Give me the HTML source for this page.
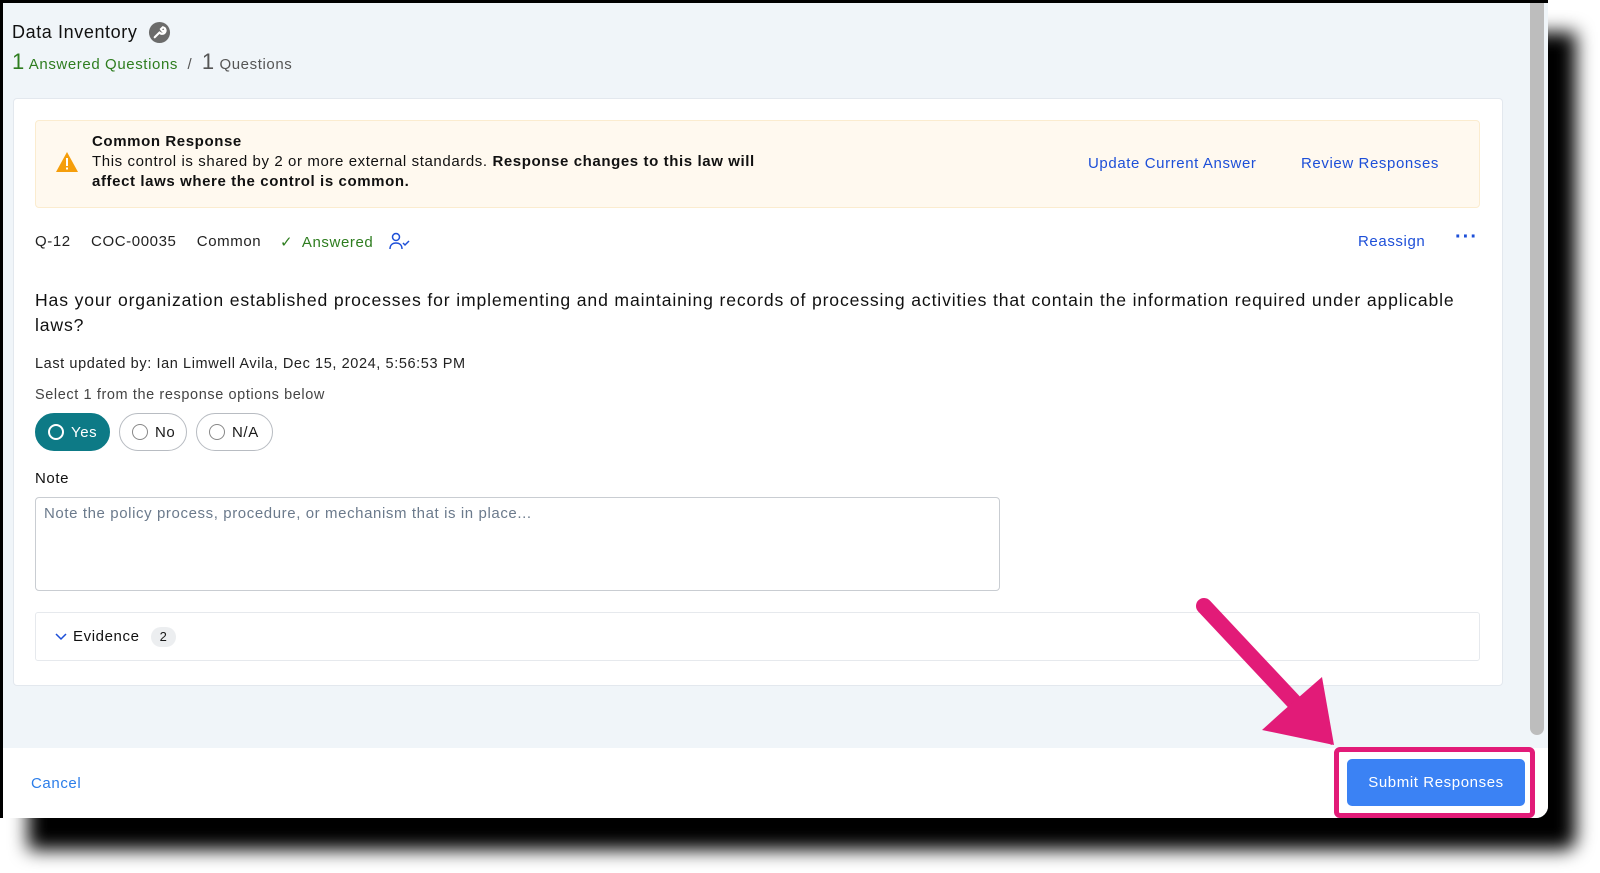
<!DOCTYPE html>
<html><head><meta charset="utf-8"><style>
*{box-sizing:border-box;margin:0;padding:0}
body{width:1600px;height:873px;background:#fff;position:relative;overflow:hidden;font-family:"Liberation Sans",sans-serif;color:#1a1a1a;letter-spacing:0.6px}
.win{position:absolute;left:0;top:0;width:1548px;height:818px;background:#f0f5f9;border:3px solid #000;border-right:none;border-bottom:none;border-radius:0 0 12px 0;box-shadow:28px 32px 18px #000;overflow:hidden}
.a{position:absolute;white-space:nowrap}
.card{position:absolute;left:10px;top:95px;width:1490px;height:588px;background:#fff;border:1px solid #e3e8ee;border-radius:4px}
.banner{position:absolute;left:32px;top:117px;width:1445px;height:88px;background:#fff9ef;border:1px solid #fbeccf;border-radius:4px}
.link{color:#1d4fd8;font-size:15px}
.pill{position:absolute;top:410px;height:38px;border:1px solid #b8bcc2;border-radius:19px;font-size:15px;display:flex;align-items:center;padding-left:12px;gap:7px}
.rad{width:16px;height:16px;border:1.5px solid #888;border-radius:50%}
.foot{position:absolute;left:0;top:745px;width:1548px;height:75px;background:#fff}
</style></head><body>
<div class="win">
 <div class="a" style="left:9px;top:19px;font-size:18px;color:#111">Data Inventory</div>
 <svg class="a" style="left:145px;top:18px" width="23" height="23" viewBox="0 0 24 24"><circle cx="12" cy="12" r="11" fill="#6b6b6b"/><path d="M7 17l5-5M12 12a3.5 3.5 0 1 0 3.5-5.5l-2 2 1 1.5 1.5 1 2-2A3.5 3.5 0 0 1 12 12" stroke="#fff" stroke-width="2.2" fill="none" stroke-linecap="round"/></svg>
 <div class="a" style="left:9px;top:46px;font-size:15px;color:#2e7d1f"><span style="font-size:22px">1</span> Answered Questions <span style="color:#555">&nbsp;/&nbsp; <span style="font-size:22px">1</span> Questions</span></div>
 <div class="card"></div>
 <div class="banner"></div>
 <svg class="a" style="left:52px;top:148px" width="24" height="22" viewBox="0 0 24 22"><path d="M12 1L23 21H1z" fill="#f59e0b"/><rect x="11" y="7" width="2" height="8" fill="#fff"/><rect x="11" y="16.5" width="2" height="2" fill="#fff"/></svg>
 <div class="a" style="left:89px;top:129px;font-size:15px;line-height:20px;font-weight:bold;color:#111">Common Response</div>
 <div class="a" style="left:89px;top:149px;font-size:15px;line-height:20px;color:#111">This control is shared by 2 or more external standards. <b>Response changes to this law will</b><br><b>affect laws where the control is common.</b></div>
 <div class="a link" style="left:1085px;top:152px">Update Current Answer</div>
 <div class="a link" style="left:1298px;top:152px">Review Responses</div>
 <div class="a" style="left:32px;top:230px;font-size:15px;color:#222;word-spacing:2px">Q-12 &nbsp; COC-00035 &nbsp; Common</div>
 <div class="a" style="left:277px;top:230px;font-size:15px;color:#2e7d1f">✓&nbsp; Answered</div>
 <svg class="a" style="left:386px;top:229px" width="22" height="18" viewBox="0 0 22 18"><circle cx="7" cy="5" r="3.5" stroke="#1d4fd8" stroke-width="1.5" fill="none"/><path d="M1 17c0-4 2.5-6 6-6s6 2 6 6M14 11l2 2 4-4" stroke="#1d4fd8" stroke-width="1.5" fill="none"/></svg>
 <div class="a link" style="left:1355px;top:230px">Reassign</div>
 <div class="a link" style="left:1452px;top:223px;font-size:20px;letter-spacing:1px;font-weight:bold">···</div>
 <div class="a" style="left:32px;top:285px;font-size:17.6px;line-height:25px;color:#111;letter-spacing:0.85px">Has your organization established processes for implementing and maintaining records of processing activities that contain the information required under applicable<br>laws?</div>
 <div class="a" style="left:32px;top:353px;font-size:14.5px;color:#222">Last updated by: Ian Limwell Avila, Dec 15, 2024, 5:56:53 PM</div>
 <div class="a" style="left:32px;top:384px;font-size:14.5px;color:#444">Select 1 from the response options below</div>
 <div class="pill" style="left:32px;width:75px;background:#0d7a86;border-color:#0d7a86;color:#fff"><span class="rad" style="border-color:#fff;border-width:2px"></span>Yes</div>
 <div class="pill" style="left:116px;width:68px"><span class="rad"></span>No</div>
 <div class="pill" style="left:193px;width:77px"><span class="rad"></span>N/A</div>
 <div class="a" style="left:32px;top:467px;font-size:15px;color:#111">Note</div>
 <div class="a" style="left:32px;top:494px;width:965px;height:94px;border:1px solid #c9cdd2;border-radius:4px;background:#fff;padding:7px 8px;font-size:15px;color:#6b7a8c">Note the policy process, procedure, or mechanism that is in place...</div>
 <div class="a" style="left:32px;top:609px;width:1445px;height:49px;border:1px solid #e6e9ed;border-radius:3px;background:#fff"></div>
 <svg class="a" style="left:52px;top:630px" width="12" height="8" viewBox="0 0 12 8"><path d="M1 1l5 5 5-5" stroke="#1d4fd8" stroke-width="1.5" fill="none"/></svg>
 <div class="a" style="left:70px;top:625px;font-size:15px;color:#111">Evidence</div>
 <div class="a" style="left:148px;top:624px;width:25px;height:20px;border-radius:10px;background:#eceef0;font-size:13px;text-align:center;line-height:20px">2</div>
 <div class="a" style="left:1527px;top:0;width:14px;height:732px;background:#bdbdbd;border-radius:0 0 7px 7px"></div>
 <div class="foot"></div>
 <div class="a" style="left:28px;top:772px;font-size:15px;color:#2b7de9">Cancel</div>
</div>
<svg class="a" style="left:0;top:0" width="1600" height="873"><path d="M1204 606L1295 703" stroke="#e21b78" stroke-width="16" stroke-linecap="round"/><path d="M1287 710L1323 698L1332 745L1288 727z" fill="#e21b78"/><path d="M1283 711L1322 677L1334 745L1262 730z" fill="#e21b78"/></svg>
<div class="a" style="left:1334px;top:747px;width:201px;height:71px;border:5px solid #e21b78;border-radius:6px;background:#fff"></div>
<div class="a" style="left:1347px;top:759px;width:178px;height:47px;background:#3b82f4;border-radius:5px;color:#fff;font-size:15px;text-align:center;line-height:47px">Submit Responses</div>
</body></html>
